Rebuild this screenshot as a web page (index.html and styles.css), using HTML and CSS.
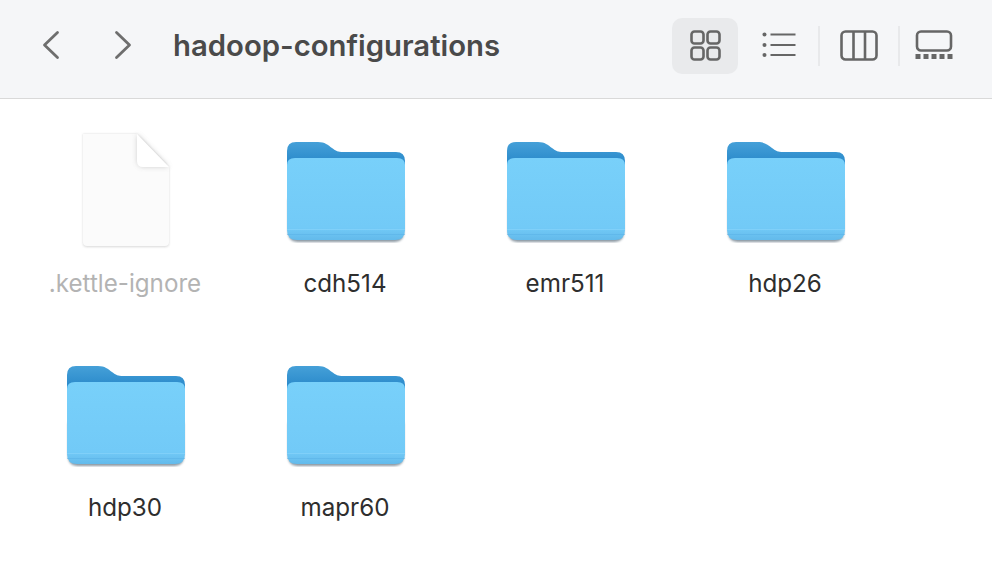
FILE: index.html
```html
<!DOCTYPE html>
<html lang="en">
<head>
<meta charset="utf-8">
<title>hadoop-configurations</title>
<link rel="stylesheet" href="styles.css">
</head>
<body>
<svg class="defs" width="0" height="0" aria-hidden="true">
  <defs>
    <linearGradient id="folderFront" x1="0" y1="0" x2="0" y2="1">
      <stop offset="0" stop-color="#78d0fa"/>
      <stop offset="0.85" stop-color="#72caf7"/>
      <stop offset="1" stop-color="#63baeb"/>
    </linearGradient>
    <linearGradient id="folderBack" x1="0" y1="0" x2="0" y2="1">
      <stop offset="0" stop-color="#45a0d8"/>
      <stop offset="0.5" stop-color="#2d8ccc"/>
      <stop offset="1" stop-color="#1f7ec2"/>
    </linearGradient>
    <filter id="blurSoft" x="-10%" y="-10%" width="120%" height="125%">
      <feGaussianBlur stdDeviation="1.1"/>
    </filter>
    <filter id="blurFold" x="-30%" y="-30%" width="160%" height="160%">
      <feGaussianBlur stdDeviation="2.5"/>
    </filter>
    <symbol id="folder" viewBox="0 0 122 104">
      <path d="M3 60 H119 V92 Q119 103 110 103 H12 Q3 103 3 92 Z" fill="#33475a" opacity="0.55" filter="url(#blurSoft)"/>
      <path d="M2 12 Q2 3 11 3 H33 C40 3 43 6 47 9 C51 12 53 13 58 13 H111 Q120 13 120 22 V40 H2 Z" fill="url(#folderBack)"/>
      <path d="M2 26 Q2 19 10 19 H112 Q120 19 120 26 V91 Q120 101 110 101 H12 Q2 101 2 91 Z" fill="url(#folderFront)"/>
      <path d="M2 90 H120 V91 H2 Z" fill="#8ad6fb" opacity="0.6"/>
      <path d="M2 95 H120 V96 H2 Z" fill="#58afe6" opacity="0.5"/>
    </symbol>
  </defs>
</svg>

<header class="toolbar">
  <svg class="nav-icon" viewBox="0 0 24 36"><path d="M17.5 5.5 L4.5 18 L17.5 30.5"/></svg>
  <svg class="nav-icon nav-forward" viewBox="0 0 24 36"><path d="M5.5 5.5 L18.5 18 L5.5 30.5"/></svg>
  <h1 class="title">hadoop-configurations</h1>
  <div class="views">
    <div class="view-btn active">
      <svg class="view-icon" width="32" height="32" viewBox="0 0 32 32">
        <rect x="2.5" y="1.5" width="12" height="12" rx="3"/><rect x="18.5" y="1.5" width="12" height="12" rx="3"/>
        <rect x="2.5" y="17.5" width="12" height="12" rx="3"/><rect x="18.5" y="17.5" width="12" height="12" rx="3"/>
      </svg>
    </div>
    <div class="view-btn list">
      <svg class="view-icon thin" width="36" height="32" viewBox="0 0 36 32">
        <circle class="solid" cx="3.5" cy="4.5" r="2"/><circle class="solid" cx="3.5" cy="15" r="2"/><circle class="solid" cx="3.5" cy="25" r="2"/>
        <path d="M9.5 4.5 H34.5 M9.5 15 H34.5 M9.5 25 H34.5"/>
      </svg>
    </div>
    <span class="divider"></span>
    <div class="view-btn narrow">
      <svg class="view-icon" width="40" height="32" viewBox="0 0 40 32">
        <rect x="2.5" y="1.5" width="35" height="28" rx="4"/><path d="M14.5 1.5 V29.5 M26 1.5 V29.5"/>
      </svg>
    </div>
    <span class="divider"></span>
    <div class="view-btn narrow">
      <svg class="view-icon" width="40" height="32" viewBox="0 0 40 32">
        <rect x="2" y="1.5" width="34" height="19" rx="4"/>
        <g class="solid"><rect x="0.5" y="24" width="5" height="5"/><rect x="8.5" y="24" width="5" height="5"/><rect x="16.5" y="24" width="5" height="5"/><rect x="24.5" y="24" width="5" height="5"/><rect x="32.5" y="24" width="5" height="5"/></g>
      </svg>
    </div>
  </div>
</header>

<main class="grid">
  <figure class="item">
    <svg class="thumb" width="122" height="122" viewBox="0 0 122 122">
      <path d="M19 10 H73 L105 43 V119 Q105 123 101 123 H23 Q19 123 19 119 Z" fill="#bdbdbd" opacity="0.6" filter="url(#blurSoft)"/>
      <path d="M19 10 H73 L105 43 V118 Q105 122 101 122 H23 Q19 122 19 118 Z" fill="#fbfbfb"/>
      <path d="M73 10 L105 43 H80 Q73 43 73 36 Z" fill="#8c8c8c" opacity="0.4" filter="url(#blurFold)"/>
      <path d="M73 10 L105 43 H79 Q73 43 73 37 Z" fill="#ffffff"/>
    </svg>
    <figcaption class="label hidden-file">.kettle-ignore</figcaption>
  </figure>
  <figure class="item">
    <svg class="thumb" width="122" height="122" viewBox="0 0 122 122"><use href="#folder" x="1" y="15" width="122" height="104"/></svg>
    <figcaption class="label">cdh514</figcaption>
  </figure>
  <figure class="item">
    <svg class="thumb" width="122" height="122" viewBox="0 0 122 122"><use href="#folder" x="1" y="15" width="122" height="104"/></svg>
    <figcaption class="label">emr511</figcaption>
  </figure>
  <figure class="item">
    <svg class="thumb" width="122" height="122" viewBox="0 0 122 122"><use href="#folder" x="1" y="15" width="122" height="104"/></svg>
    <figcaption class="label">hdp26</figcaption>
  </figure>
  <figure class="item">
    <svg class="thumb" width="122" height="122" viewBox="0 0 122 122"><use href="#folder" x="1" y="15" width="122" height="104"/></svg>
    <figcaption class="label">hdp30</figcaption>
  </figure>
  <figure class="item">
    <svg class="thumb" width="122" height="122" viewBox="0 0 122 122"><use href="#folder" x="1" y="15" width="122" height="104"/></svg>
    <figcaption class="label">mapr60</figcaption>
  </figure>
</main>
</body>
</html>
```
FILE: styles.css
```css
* { box-sizing: border-box; }
html, body { margin: 0; padding: 0; height: 100%; }
body {
  background: #fff;
  font-family: Inter, "Liberation Sans", sans-serif;
  overflow: hidden;
}
.defs { position: absolute; }
.toolbar {
  display: flex;
  align-items: center;
  height: 99px;
  padding: 0 0 6px 40px;
  background: #f5f6f8;
  border-bottom: 1px solid #d9d9d9;
}
.nav-icon {
  width: 24px;
  height: 36px;
  margin-bottom: 2px;
  fill: none;
  stroke: #6e6e6e;
  stroke-width: 2.8;
  stroke-linecap: round;
  stroke-linejoin: round;
}
.nav-forward { margin-left: 47px; }
.title {
  margin: 0 0 2px 38px;
  font-size: 29.3px;
  font-weight: 600;
  color: #4a4a4a;
  letter-spacing: 0;
}
.views {
  display: flex;
  align-items: center;
  margin-left: auto;
  padding-right: 37px;
}
.view-btn {
  display: flex;
  align-items: center;
  justify-content: center;
  width: 66px;
  height: 56px;
  border-radius: 10px;
}
.view-btn.active { background: #e9eaec; margin-right: 8px; }
.view-btn.list { margin-right: 6px; }
.view-btn.narrow { width: 40px; margin: 0 19px; }
.view-btn.narrow:last-child { margin-right: 0; margin-left: 15px; }
.view-icon { fill: none; stroke: #666; stroke-width: 2.6; }
.view-icon.thin { stroke-width: 2.2; }
.view-icon .solid { fill: #666; stroke: none; }
.divider {
  width: 2px;
  height: 40px;
  background: #e8e9eb;
}
.grid {
  display: grid;
  grid-template-columns: repeat(4, 220px);
  grid-auto-rows: 224px;
  padding: 25px 0 0 15px;
}
.item {
  margin: 0;
  display: flex;
  flex-direction: column;
  align-items: center;
}
.thumb { display: block; overflow: visible; }
.label {
  margin-top: 21px;
  font-size: 24.2px;
  line-height: 34px;
  color: #2e2e2e;
}
.hidden-file { color: #b3b3b3; }
```
